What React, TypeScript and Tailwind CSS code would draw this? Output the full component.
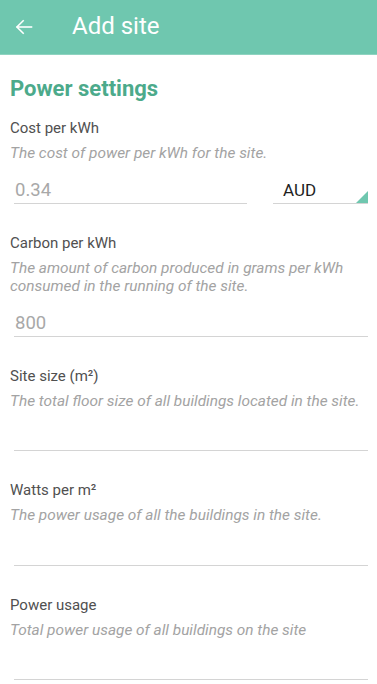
import React from 'react';

interface Field {
  label: string;
  hint: string;
  value?: string;
}

const fields: Field[] = [
  {
    label: 'Carbon per kWh',
    hint: 'The amount of carbon produced in grams per kWh consumed in the running of the site.',
    value: '800',
  },
  { label: 'Site size (m²)', hint: 'The total floor size of all buildings located in the site.' },
  { label: 'Watts per m²', hint: 'The power usage of all the buildings in the site.' },
  { label: 'Power usage', hint: 'Total power usage of all buildings on the site' },
];

function FieldLabel({ label, hint }: { label: string; hint: string }) {
  return (
    <div className="px-[10px]">
      <div className="text-[15px] leading-[20px] text-[#505050]">{label}</div>
      <div className="mt-[6px] text-[15.4px] leading-[18.5px] italic text-[#a3a3a3]">{hint}</div>
    </div>
  );
}

function Input({ value }: { value?: string }) {
  return (
    <div className="h-[26px] border-b border-[#d4d4d4] pl-[1px] pb-[1px] text-[18.5px] leading-[24px] text-[#a8a8a8]">
      {value}
    </div>
  );
}

export default function App() {
  return (
    <div className="w-[377px] h-[684px] overflow-hidden bg-white" style={{ fontFamily: 'Roboto, "Noto Sans", sans-serif' }}>
      {/* Toolbar */}
      <header className="h-[55px] bg-[#6fc7af] flex items-center border-b border-[#8fd3c0]">
        <button className="w-[46px] h-full flex items-center justify-center pl-[1px] text-white">
          <svg width="20" height="20" viewBox="0 0 24 24" fill="none" stroke="white" strokeWidth="1.9" strokeLinecap="square">
            <path d="M21 12H4" />
            <path d="M11 4.5L3.5 12L11 19.5" />
          </svg>
        </button>
        <h1 className="ml-[26px] text-[24px] leading-none text-white -mt-[2px]">Add site</h1>
      </header>

      <div className="pt-[20px]">
        <h2 className="px-[10px] text-[22px] leading-[28px] font-bold text-[#4caa8b]">Power settings</h2>

        {/* Cost per kWh */}
        <div className="mt-[15px]">
          <FieldLabel label="Cost per kWh" hint="The cost of power per kWh for the site." />
          <div className="mt-[15px] flex items-end pl-[14px] pr-[9px] gap-[26px]">
            <div className="flex-1">
              <Input value="0.34" />
            </div>
            <div className="relative w-[95px] h-[26px] border-b border-[#d4d4d4] pl-[10px] text-[17px] leading-[24px] text-[#1f1f1f]">
              AUD
              <div className="absolute right-0 bottom-0 w-0 h-0 border-l-[12px] border-l-transparent border-b-[12px] border-b-[#6fc7af]" />
            </div>
          </div>
        </div>

        {fields.map((f) => (
          <div key={f.label} className="mt-[29px]">
            <FieldLabel label={f.label} hint={f.hint} />
            <div className="mt-[15px] pl-[14px] pr-[9px]">
              <Input value={f.value} />
            </div>
          </div>
        ))}
      </div>
    </div>
  );
}
